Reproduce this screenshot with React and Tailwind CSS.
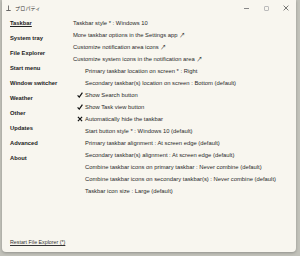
import React from "react";

const sidebar = [
  "Taskbar",
  "System tray",
  "File Explorer",
  "Start menu",
  "Window switcher",
  "Weather",
  "Other",
  "Updates",
  "Advanced",
  "About",
];

const rows = [
  { text: "Taskbar style * : Windows 10" },
  { text: "More taskbar options in the Settings app ↗" },
  { text: "Customize notification area icons ↗" },
  { text: "Customize system icons in the notification area ↗" },
  { text: "Primary taskbar location on screen * : Right", indent: true },
  { text: "Secondary taskbar(s) location on screen : Bottom (default)", indent: true },
  { text: "Show Search button", mark: "check" },
  { text: "Show Task view button", mark: "check" },
  { text: "Automatically hide the taskbar", mark: "cross" },
  { text: "Start button style * : Windows 10 (default)", indent: true },
  { text: "Primary taskbar alignment : At screen edge (default)", indent: true },
  { text: "Secondary taskbar(s) alignment : At screen edge (default)", indent: true },
  { text: "Combine taskbar icons on primary taskbar : Never combine (default)", indent: true },
  { text: "Combine taskbar icons on secondary taskbar(s) : Never combine (default)", indent: true },
  { text: "Taskbar icon size : Large (default)", indent: true },
];

const Mark = ({ type }) => (
  <span className="w-[12px] flex items-center justify-start pl-[4px]">
    {type === "check" ? (
      <svg width="6" height="6" viewBox="0 0 10 10">
        <path d="M1 5.5 L3.8 8.5 L9 1" fill="none" stroke="#111" strokeWidth="2" />
      </svg>
    ) : (
      <svg width="6" height="6" viewBox="0 0 10 10">
        <path d="M1.5 1.5 L8.5 8.5 M8.5 1.5 L1.5 8.5" fill="none" stroke="#111" strokeWidth="2" />
      </svg>
    )}
  </span>
);

export default function App() {
  return (
    <div className="w-[300px] h-[256px] bg-[#c2c2ba] overflow-hidden font-['Liberation_Sans',_'Noto_Sans_CJK_JP',_sans-serif] text-[#222]">
      <div className="ml-[2px] w-[294px] h-[252px] bg-[#f8f6ef] rounded-b-[4px] shadow-[0_1px_3px_rgba(0,0,0,0.25)] flex flex-col">
        {/* title bar */}
        <div className="h-[16px] flex items-center">
          <div className="pl-[4px] pr-[4px] flex items-center">
            <svg width="5" height="6" viewBox="0 0 5 6">
              <path d="M2.5 0.5 V5" stroke="#555" strokeWidth="0.8" />
              <path d="M0.3 5.5 H4.7" stroke="#555" strokeWidth="0.9" />
            </svg>
          </div>
          <span className="text-[5px] text-[#333] font-['Noto_Sans_CJK_JP',_sans-serif] tracking-[0.2px]">
            プロパティ
          </span>
          <div className="ml-auto flex h-full">
            <div className="w-[20px] flex items-center justify-center">
              <div className="w-[5px] h-[0.6px] bg-[#888]" />
            </div>
            <div className="w-[20px] flex items-center justify-center">
              <div className="w-[5px] h-[5px] border-[0.6px] border-[#bbb] rounded-[1px]" />
            </div>
            <div className="w-[20px] flex items-center justify-center">
              <svg width="6" height="6" viewBox="0 0 10 10">
                <path d="M1 1 L9 9 M9 1 L1 9" stroke="#444" strokeWidth="1.2" />
              </svg>
            </div>
          </div>
        </div>

        {/* body */}
        <div className="flex flex-1">
          <div className="w-[71px] flex flex-col pl-[8px] pb-[5px]">
            {sidebar.map((s, i) => (
              <div key={s} className="h-[15px] flex items-center">
                <span className={`text-[5.8px] font-bold text-[#222] ${i === 0 ? "underline underline-offset-[1px]" : ""}`}>
                  {s}
                </span>
              </div>
            ))}
            <div className="mt-auto text-[5.3px] text-[#333] underline underline-offset-[1px]">
              Restart File Explorer (*)
            </div>
          </div>

          <div className="flex-1 flex flex-col pt-[1px]">
            {rows.map((r) => (
              <div key={r.text} className="h-[12px] flex items-center text-[5.85px] text-[#2a2a2a] whitespace-nowrap">
                {r.mark ? <Mark type={r.mark} /> : r.indent ? <span className="w-[12px]" /> : null}
                <span>{r.text}</span>
              </div>
            ))}
          </div>
        </div>
      </div>
    </div>
  );
}
